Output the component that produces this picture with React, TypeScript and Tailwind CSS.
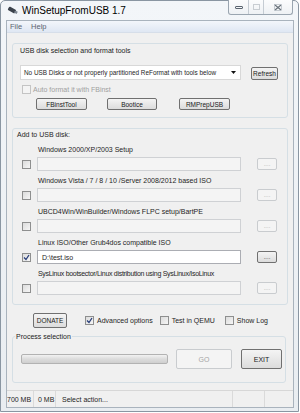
import React from "react";

function Check({ checked = false, disabled = false }: { checked?: boolean; disabled?: boolean }) {
  return (
    <span
      className={`flex h-[9px] w-[9px] shrink-0 items-center justify-center border ${
        disabled ? "border-[#c4c4c4] bg-[#f4f4f4]" : "border-[#8e8f8f] bg-gradient-to-br from-[#dcdcdc] to-[#f6f6f6]"
      }`}
    >
      {checked && (
        <svg width="7" height="7" viewBox="0 0 7 7">
          <path d="M1 3.5 L3 5.5 L6 1" stroke="#2a3f7a" strokeWidth="1.3" fill="none" />
        </svg>
      )}
    </span>
  );
}

function Btn({ children, className = "", disabled = false }: { children: React.ReactNode; className?: string; disabled?: boolean }) {
  return (
    <div
      className={`flex items-center justify-center rounded-[2px] border ${
        disabled
          ? "border-[#c9cccf] bg-[#f4f4f4] text-[#a5a5a5]"
          : "border-[#707070] bg-gradient-to-b from-[#f4f4f4] to-[#dcdcdc] text-[#1a1a1a]"
      } ${className}`}
    >
      {children}
    </div>
  );
}

const rows = [
  { label: "Windows 2000/XP/2003 Setup", value: "" },
  { label: "Windows Vista / 7 / 8 / 10 /Server 2008/2012 based ISO", value: "" },
  { label: "UBCD4Win/WinBuilder/Windows FLPC setup/BartPE", value: "" },
  { label: "Linux ISO/Other Grub4dos compatible ISO", value: "D:\\test.iso" },
  { label: "SysLinux bootsector/Linux distribution using SysLinux/IsoLinux", value: "" },
];

export default function App() {
  return (
    <div className="h-[413px] w-[300px] overflow-hidden bg-white font-['Liberation_Sans',Arial,sans-serif] text-[7px] leading-[9px] text-[#1e1e1e]">
      {/* Window frame */}
      <div className="flex h-[412px] w-[299px] flex-col rounded-t-[5px] border border-[#8a96a2] bg-gradient-to-b from-[#f3f6f9] to-[#e9edf1] pl-[5px] pr-[4px] pb-[3px]">
        {/* Title bar */}
        <div className="flex h-[19px] shrink-0 items-start">
          <div className="flex h-[19px] items-center gap-[4px] pl-[1px]">
            <svg width="11" height="9" viewBox="0 0 11 9">
              <rect x="1" y="2" width="8" height="4" rx="1" transform="rotate(28 5 4)" fill="#3c434c" />
              <rect x="7.5" y="5" width="3" height="2.5" transform="rotate(28 9 6)" fill="#7d8690" />
            </svg>
            <span className="text-[10px] leading-[11px] text-black">WinSetupFromUSB 1.7</span>
          </div>
          <div className="ml-auto mr-[1px] mt-[-1px] flex h-[15px] w-[65px] rounded-b-[3px] border border-t-0 border-[#9aa5b0] bg-gradient-to-b from-[#fbfcfd] to-[#eef1f4]">
            <div className="flex w-[20px] items-center justify-center border-r border-[#c5ccd3]">
              <span className="h-[3px] w-[8px] rounded-[1px] border border-[#5a6470]" />
            </div>
            <div className="flex w-[15px] items-center justify-center border-r border-[#c5ccd3]">
              <span className="h-[6px] w-[7px] border border-[#c8cdd2]" />
            </div>
            <div className="flex flex-1 items-center justify-center">
              <svg width="8" height="7" viewBox="0 0 8 7">
                <path d="M1 1 L7 6 M7 1 L1 6" stroke="#6a737c" strokeWidth="1.2" />
                <rect x="0.5" y="0.5" width="7" height="6" fill="none" stroke="#a7afb7" strokeWidth="0.6" />
              </svg>
            </div>
          </div>
        </div>

        {/* Client area */}
        <div className="flex flex-1 flex-col border border-[#a9b3bd] bg-[#f0f0f0]">
          {/* Menu */}
          <div className="flex h-[12px] shrink-0 items-center gap-[9px] border-b border-[#d6dee9] bg-gradient-to-b from-[#f3f6fb] to-[#dfe7f3] pl-[3px] text-[7.5px] text-[#5d6670]">
            <span>File</span>
            <span>Help</span>
          </div>

          <div className="flex flex-col px-[5px]">
            {/* USB disk selection */}
            <div className="mt-[10px] flex h-[75px] flex-col rounded-[3px] border border-[#d5dfe5] pl-[7px]">
              <span className="mt-[2px] text-[#222]">USB disk selection and format tools</span>
              <div className="mt-[10px] flex items-end">
                <div className="flex h-[15px] w-[221px] items-center justify-between border border-[#d8d8d8] bg-white pl-[3px] pr-[4px]">
                  <span className="whitespace-nowrap text-[6.4px]">No USB Disks or not properly partitioned ReFormat with tools below</span>
                  <svg width="5" height="3" viewBox="0 0 5 3">
                    <path d="M0 0 L5 0 L2.5 3 Z" fill="#111" />
                  </svg>
                </div>
                <Btn className="ml-[10px] h-[13px] w-[27px] text-[6.5px]">Refresh</Btn>
              </div>
              <div className="mt-[4px] flex h-[10px] items-center gap-[2px] pl-[2px] text-[#a0a0a0]">
                <Check disabled />
                <span>Auto format it with FBinst</span>
              </div>
              <div className="mt-[4px] flex h-[12px] pl-[16px]">
                <Btn className="w-[51px] text-[6.5px]">FBinstTool</Btn>
                <Btn className="ml-[20px] w-[50px] text-[6.5px]">Bootice</Btn>
                <Btn className="ml-[22px] w-[51px] text-[6.5px]">RMPrepUSB</Btn>
              </div>
            </div>

            {/* Add to USB disk */}
            <div className="mt-[10px] flex h-[177px] flex-col rounded-[3px] border border-[#d5dfe5] pl-[4px]">
              <span className="mt-[1px]">Add to USB disk:</span>
              <div className="mt-[6px] flex flex-col">
                {rows.map((r, i) => (
                  <div key={r.label} className="flex h-[31px] flex-col">
                    <span className={`h-[9px] whitespace-nowrap pl-[21px] ${i === 4 ? "tracking-[-0.3px]" : ""}`}>{r.label}</span>
                    <div className="mt-[3px] flex h-[14px] items-center pl-[5px]">
                      <Check checked={r.value !== ""} />
                      <div
                        className={`ml-[6px] flex h-[14px] w-[204px] items-center border pl-[4px] ${
                          r.value ? "border-[#abadb3] bg-white" : "border-[#cfd1d4] bg-[#f4f4f4]"
                        }`}
                      >
                        {r.value}
                      </div>
                      <Btn disabled={!r.value} className="ml-[16px] h-[12px] w-[20px] text-[6px]">
                        ....
                      </Btn>
                    </div>
                  </div>
                ))}
              </div>
            </div>

            {/* Options */}
            <div className="mt-[8px] flex h-[15px] items-center">
              <Btn className="ml-[21px] h-[15px] w-[34px] text-[6.5px]">DONATE</Btn>
              <div className="ml-[18px] flex items-center gap-[3px]">
                <Check checked />
                <span>Advanced options</span>
              </div>
              <div className="ml-[7px] flex items-center gap-[3px]">
                <Check />
                <span>Test in QEMU</span>
              </div>
              <div className="ml-[10px] flex items-center gap-[3px]">
                <Check />
                <span>Show Log</span>
              </div>
            </div>

            {/* Process selection */}
            <fieldset className="mr-[2px] mt-[4px] h-[51px] rounded-[3px] border border-[#d5dfe5] pl-[2px]">
              <legend className="px-[1px] text-[#222]">Process selection</legend>
              <div className="mt-[8px] flex items-center pl-[6px]">
                <div className="h-[10px] w-[147px] rounded-[2px] border border-[#b2b2b2] bg-gradient-to-b from-[#f2f2f2] via-[#dcdcdc] to-[#cfcfcf]" />
                <Btn disabled className="ml-[8px] h-[20px] w-[56px] text-[7px]">GO</Btn>
                <Btn className="ml-[9px] h-[20px] w-[41px] text-[7px]">EXIT</Btn>
              </div>
            </fieldset>
          </div>

          <div className="flex-1" />

          {/* Status bar */}
          <div className="flex h-[17px] shrink-0 items-center border-t border-[#d7d7d7] bg-[#f0f0f0] text-[7px]">
            <span className="w-[26px] shrink-0">700 MB</span>
            <span className="h-full border-l border-[#dadada]" />
            <span className="w-[21px] shrink-0 pl-[4px]">0 MB</span>
            <span className="h-full border-l border-[#dadada]" />
            <span className="w-[176px] shrink-0 pl-[6px]">Select action...</span>
            <span className="h-full border-l border-[#dadada]" />
            <span className="w-[31px] shrink-0" />
            <span className="h-full border-l border-[#dadada]" />
          </div>
        </div>
      </div>
    </div>
  );
}
